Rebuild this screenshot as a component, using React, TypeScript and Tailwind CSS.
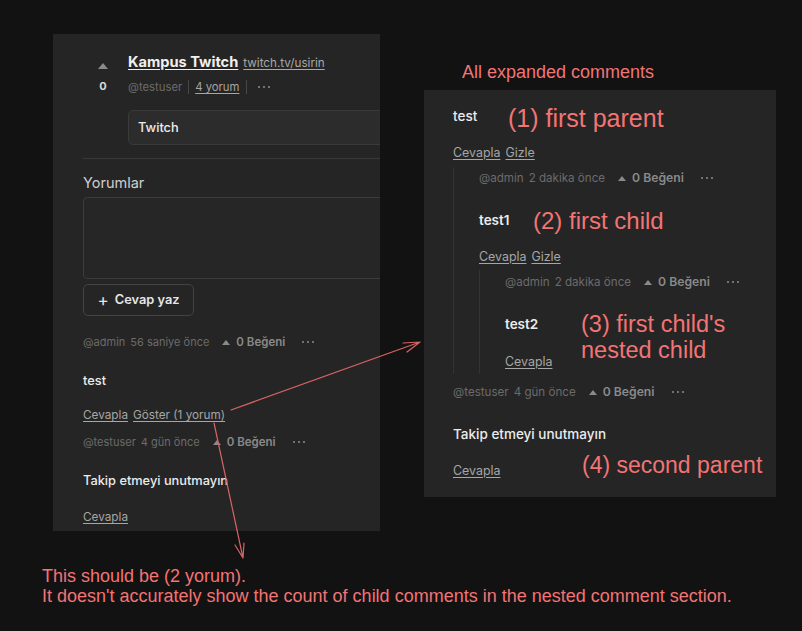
import type { ReactNode } from 'react'

const RED = 'text-[#f27474]'

function Dots() {
  return (
    <span className="flex items-center gap-[3px]">
      <span className="w-[2px] h-[2px] rounded-full bg-[#8c8c8c]" />
      <span className="w-[2px] h-[2px] rounded-full bg-[#8c8c8c]" />
      <span className="w-[2px] h-[2px] rounded-full bg-[#8c8c8c]" />
    </span>
  )
}

function Meta({ user, time, big, className = '' }: { user: string; time: string; big?: boolean; className?: string }) {
  return (
    <div className={`flex items-center h-[14px] leading-[14px] text-[#6b6b6b] whitespace-nowrap ${big ? 'text-[11.6px]' : 'text-[11px]'} ${className}`}>
      <span>{user}</span>
      <span className="ml-[5px]">{time}</span>
      <span className="ml-[13px] w-0 h-0 border-l-[4px] border-r-[4px] border-b-[5px] border-l-transparent border-r-transparent border-b-[#8a8a8a]" />
      <span className={`ml-[6px] font-semibold text-[#8a8a8a] ${big ? 'text-[12.2px]' : 'text-[11.5px]'}`}>0 Beğeni</span>
      <span className="ml-[17px]"><Dots /></span>
    </div>
  )
}

function Links({ items, big, className = '' }: { items: string[]; big?: boolean; className?: string }) {
  return (
    <div className={`flex gap-[5px] h-[14px] leading-[14px] text-[#a6a6a6] whitespace-nowrap ${big ? 'text-[12.4px]' : 'text-[11.75px]'} ${className}`}>
      {items.map(t => <span key={t} className="underline underline-offset-2">{t}</span>)}
    </div>
  )
}

function Body({ children, bold, big, className = '' }: { children: ReactNode; bold?: boolean; big?: boolean; className?: string }) {
  return (
    <p className={`h-[16px] leading-[16px] text-[#ececec] whitespace-nowrap ${big ? 'text-[13.5px]' : 'text-[12.8px]'} ${bold ? 'font-semibold' : 'font-medium'} ${className}`}>
      {children}
    </p>
  )
}

// row holding a comment line plus the red note beside it
function Noted({ width, shift, size = 'text-[24px]', note, children, className = '' }: { width: string; shift: string; size?: string; note: ReactNode; children: ReactNode; className?: string }) {
  return (
    <div className={`flex h-[16px] ${className}`}>
      <div className={`${width} shrink-0`}>{children}</div>
      <div className={`${shift} ${size} leading-[26px] whitespace-nowrap font-['Liberation_Sans',Arial,sans-serif] ${RED}`}>{note}</div>
    </div>
  )
}

function PostPanel() {
  return (
    <div className="w-[327px] h-[497px] shrink-0 bg-[#252525] overflow-hidden">
      {/* ── Post ── */}
      <div className="pt-[20px] flex">
        <div className="ml-[40px] w-[20px] shrink-0 flex flex-col items-center">
          <span className="mt-[9px] w-0 h-0 border-l-[5px] border-r-[5px] border-b-[6px] border-l-transparent border-r-transparent border-b-[#8a8a8a]" />
          <span className="mt-[10px] text-[11px] leading-[14px] font-bold text-[#d8d8d8]">0</span>
        </div>
        <div className="ml-[15px] min-w-0">
          <div className="flex items-baseline gap-[5px] h-[16px] whitespace-nowrap">
            <span className="text-[14.6px] leading-[16px] font-bold text-[#f0f0f0] underline underline-offset-2">Kampus Twitch</span>
            <span className="text-[11.7px] leading-[16px] text-[#a8a8a8] underline underline-offset-2">twitch.tv/usirin</span>
          </div>
          <div className="mt-[10px] flex items-center h-[14px] text-[11.3px] leading-[14px] text-[#6b6b6b] whitespace-nowrap">
            <span>@testuser</span>
            <span className="mx-[6px] w-px h-[14px] bg-[#474747]" />
            <span className="text-[#a6a6a6] underline underline-offset-2">4 yorum</span>
            <span className="mx-[7px] w-px h-[14px] bg-[#474747]" />
            <span className="ml-[4px]"><Dots /></span>
          </div>
          <div className="mt-[16px] w-[320px] h-[35px] flex items-center pl-[9px] rounded-[5px] border border-[#3a3a3a] bg-[#2c2c2c] text-[12.8px] font-medium text-[#ececec]">
            Twitch
          </div>
        </div>
      </div>

      {/* ── Comments ── */}
      <div className="pl-[30px]">
        <div className="mt-[13px] w-[320px] h-px bg-[#383838]" />
        <h3 className="mt-[15px] text-[14.5px] leading-[18px] text-[#cfcfcf]">Yorumlar</h3>
        <div className="mt-[5px] w-[320px] h-[82px] rounded-[4px] border border-[#3c3c3c] bg-[#262626]" />
        <button className="mt-[5px] w-[111px] h-[32px] flex items-center justify-center gap-[6px] rounded-[5px] border border-[#434343] text-[12.8px] font-semibold text-[#e6e6e6]">
          <span className="text-[17px] font-normal leading-none">+</span>
          Cevap yaz
        </button>

        <Meta user="@admin" time="56 saniye önce" className="mt-[19px]" />
        <Body className="mt-[24px]">test</Body>
        <Links items={['Cevapla', 'Göster (1 yorum)']} className="mt-[19px]" />

        <Meta user="@testuser" time="4 gün önce" className="mt-[13px]" />
        <Body className="mt-[24px]">Takip etmeyi unutmayın</Body>
        <Links items={['Cevapla']} className="mt-[21px]" />
      </div>
    </div>
  )
}

function ExpandedPanel() {
  return (
    <div className="w-[352px] h-[407px] bg-[#252525] pl-[29px] pt-[18px]">
      <Noted width="w-[55px]" shift="-mt-[3px]" size="text-[25px]" note="(1) first parent">
        <Body big>test</Body>
      </Noted>
      <Links big items={['Cevapla', 'Gizle']} className="mt-[22px]" />

      <div className="mt-[7px] border-l border-[#333333] pl-[25px] pt-[4px]">
        <Meta big user="@admin" time="2 dakika önce" />
        <Noted width="w-[54px]" shift="-mt-[4px]" note="(2) first child" className="mt-[27px]">
          <Body big bold>test1</Body>
        </Noted>
        <Links big items={['Cevapla', 'Gizle']} className="mt-[22px]" />

        <div className="mt-[6px] border-l border-[#333333] pl-[25px] pt-[5px] pb-[5px]">
          <Meta big user="@admin" time="2 dakika önce" />
          <Noted width="w-[76px]" shift="-mt-[5px]" size="text-[23.5px]" note={<>(3) first child's<br />nested child</>} className="mt-[27px]">
            <Body big bold>test2</Body>
          </Noted>
          <Links big items={['Cevapla']} className="mt-[23px]" />
        </div>
      </div>

      <Meta big user="@testuser" time="4 gün önce" className="mt-[11px]" />
      <Body big className="mt-[27px]">Takip etmeyi unutmayın</Body>
      <Noted width="w-[129px]" shift="-mt-[12px]" size="text-[23px]" note="(4) second parent" className="mt-[22px]">
        <Links big items={['Cevapla']} />
      </Noted>
    </div>
  )
}

export default function App() {
  return (
    <div className="relative w-[802px] h-[631px] bg-[#121212] overflow-hidden font-['Inter',sans-serif]">
      <div className="flex items-start pt-[34px] pl-[53px]">
        <PostPanel />
        <div className="ml-[44px]">
          <p className={`h-[56px] pl-[38px] pt-[28px] text-[18px] leading-[20px] whitespace-nowrap font-['Liberation_Sans',Arial,sans-serif] ${RED}`}>
            All expanded comments
          </p>
          <ExpandedPanel />
        </div>
      </div>

      <p className={`mt-[35px] pl-[42px] text-[18px] leading-[20px] font-['Liberation_Sans',Arial,sans-serif] ${RED}`}>
        This should be (2 yorum).<br />
        It doesn't accurately show the count of child comments in the nested comment section.
      </p>

      {/* annotation arrows */}
      <svg className="absolute inset-0 pointer-events-none" width="802" height="631" viewBox="0 0 802 631" fill="none" stroke="#d86464" strokeWidth="1.2" strokeLinecap="round">
        <path d="M231 410 L420 342 M420 342 L403 343 M420 342 L407 352" />
        <path d="M214 423 L243 558 M243 558 L235 545 M243 558 L244 543" />
      </svg>
    </div>
  )
}
